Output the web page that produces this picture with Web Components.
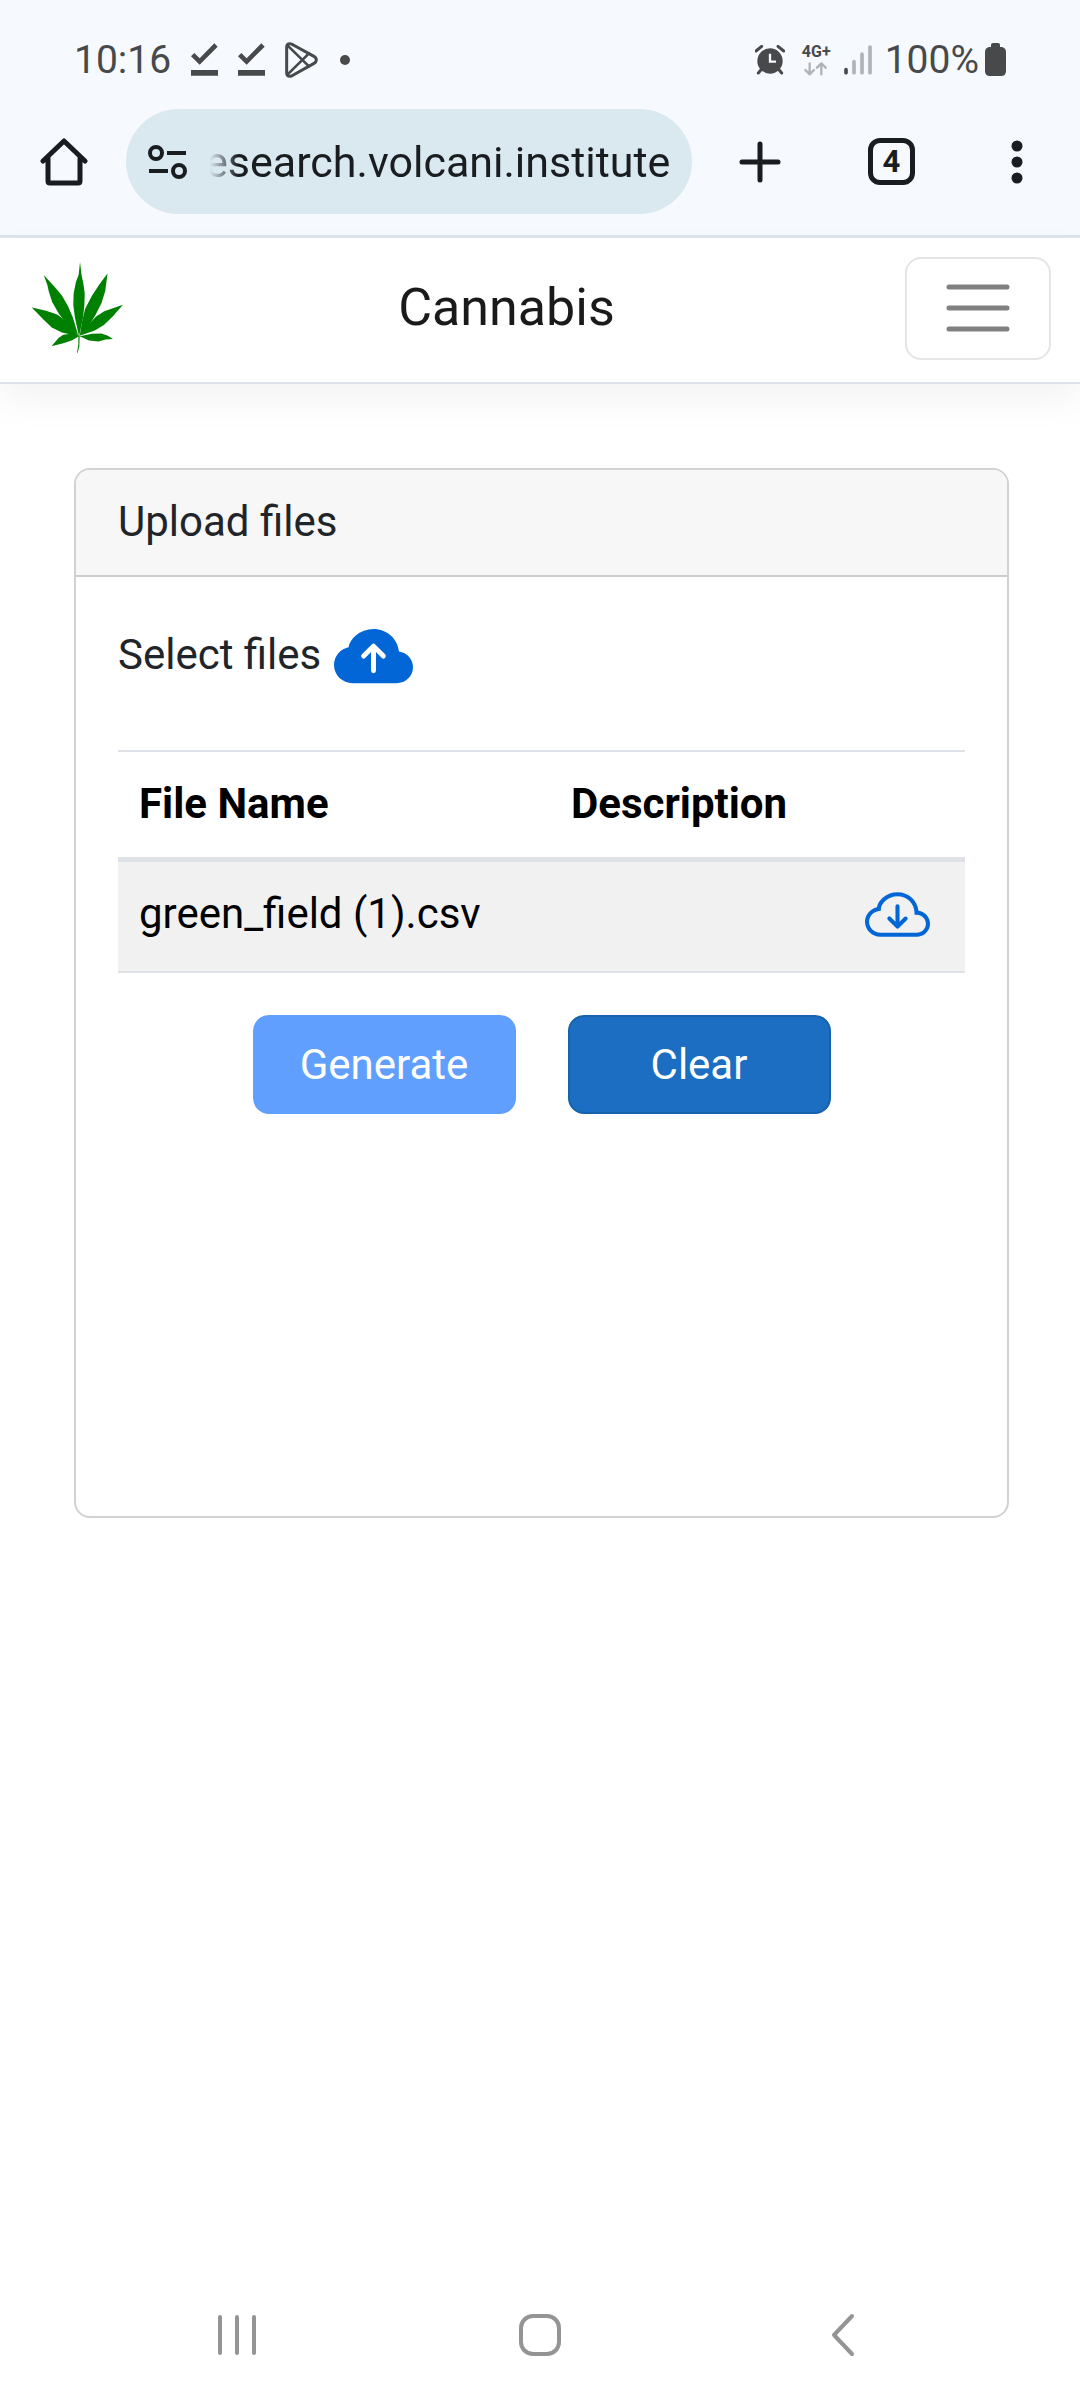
<!DOCTYPE html>
<html lang="en">
<head>
<meta charset="utf-8">
<meta name="viewport" content="width=device-width, initial-scale=1">
<title>Cannabis</title>
<style>
  body { margin: 0; background: #fff; font-family: Roboto, "Liberation Sans", sans-serif; font-size: 42px; line-height: 63px; color: #212529; }
</style>
</head>
<body>
<phone-screen>
  <status-bar slot="top" time="10:16" battery="100%"></status-bar>
  <browser-bar slot="top" url="esearch.volcani.institute" tabs="4"></browser-bar>
  <site-nav>Cannabis</site-nav>
  <upload-card>
    <span slot="header">Upload files</span>
    <file-picker>Select files</file-picker>
    <file-table file="green_field (1).csv"></file-table>
    <action-button slot="actions" kind="muted">Generate</action-button>
    <action-button slot="actions">Clear</action-button>
  </upload-card>
  <system-nav slot="bottom"></system-nav>
</phone-screen>

<script>
const define = (name, render, after) => customElements.define(name, class extends HTMLElement {
  connectedCallback() {
    if (this.shadowRoot) return;
    const root = this.attachShadow({ mode: 'open' });
    root.innerHTML = `<style>
      *, :host { box-sizing: border-box; }
      svg { display: block; flex: none; }
      button { font: inherit; color: inherit; background: none; border: 0; padding: 0; margin: 0; }
    </style>` + render(this);
    if (after) after(root);
  }
});

define('phone-screen', () => `
  <style>
    :host { display: flex; flex-direction: column; min-height: 100vh; }
    .chrome { background: #f6f9fe; border-bottom: 3px solid #dee4ea; }
    main { flex: 1; }
  </style>
  <div class="chrome"><slot name="top"></slot></div>
  <main><slot></slot></main>
  <slot name="bottom"></slot>`);

define('status-bar', el => `
  <style>
    :host { display: flex; justify-content: space-between; align-items: center; height: 109px; padding: 10px 74px 0 74px;
            font-size: 39px; line-height: 48px; color: #48494b; }
    div { display: flex; align-items: center; }
    .left { gap: 20px; }
    .right { gap: 13px; }
    .net { display: flex; flex-direction: column; align-items: center; gap: 2px; padding: 0 0 0 4px; font-size: 16px; line-height: 16px; font-weight: 700; }
    .charge { gap: 6px; }
  </style>
  <div class="left">
    <span>${el.getAttribute('time')}</span>
    ${`<svg width="27" height="33" viewBox="448 72 81 99" fill="#48494b"><path d="M448 112l10-10 16 16 44-45 10 10-54 54zM448 153h81v17h-81z"/></svg>`.repeat(2)}
    <svg width="33" height="36" viewBox="728 67 99 108" fill="none" stroke="#48494b" stroke-width="9" stroke-linejoin="round" stroke-linecap="round">
      <path d="M733 82Q733 72 743 72Q748 72 753 76L815 110Q822 114 822 121Q822 127 815 131L753 166Q747 170 743 170Q733 170 733 160Z"/>
      <path d="M736 78L800 140M736 164L800 101" stroke-width="8"/>
    </svg>
    <svg width="18" height="12" viewBox="0 0 18 12" fill="#48494b"><circle cx="7" cy="6" r="5"/></svg>
  </div>
  <div class="right">
    <svg width="30" height="30" viewBox="98 74 90 90">
      <path d="M101 92l17-14M184 92l-17-14M108 158l12-14M178 158l-12-14" stroke="#48494b" stroke-width="9" stroke-linecap="round"/>
      <circle cx="143" cy="122" r="38" fill="#48494b"/>
      <path d="M143 100v24h18" fill="none" stroke="#f6f9fe" stroke-width="7"/>
    </svg>
    <div class="net"><span>4G+</span>
      <svg width="24" height="14" viewBox="247 126 72 42" fill="none" stroke="#b1b3b7" stroke-width="7" stroke-linecap="round" stroke-linejoin="round"><path d="M264 130v33M251 150l13 13 13-13M299 163v-33M286 143l13-13 13 13"/></svg>
    </div>
    <svg width="28" height="30" viewBox="366 74 84 90" stroke-width="11" stroke-linecap="round" stroke="#b1b3b7">
      <path d="M372 148v9" stroke="#48494b"/><path d="M396 124v33M420 101v56M444 80v77"/></svg>
    <div class="charge"><span>${el.getAttribute('battery')}</span>
      <svg width="21" height="33" viewBox="0 0 21 33" fill="#48494b"><path d="M6 4V2Q6 0 8 0h5q2 0 2 2v2h2q4 1 4 5v19q0 5-5 5H5q-5 0-5-5V9Q0 5 4 4z"/></svg>
    </div>
  </div>`);

define('browser-bar', el => `
  <style>
    :host { display: flex; align-items: center; padding: 0 57px 21px 40px; color: #191d20; }
    .pill { flex: 1; min-width: 0; display: flex; align-items: center; gap: 22px; height: 105px; margin: 0 47px 0 38px; padding: 0 22px; border-radius: 53px; background: #dae8f0; }
    input { flex: 1; min-width: 0; border: 0; padding: 0; background: none; outline: 0; color: inherit; font: 43px/60px Roboto, sans-serif; text-align: right;
            -webkit-mask-image: linear-gradient(90deg, transparent, #000 28px); mask-image: linear-gradient(90deg, transparent, #000 28px); }
    .tools { display: flex; align-items: center; }
    .tabs { display: grid; place-items: center; width: 47px; height: 47px; margin: 0 96px 0 87px; border: 5px solid; border-radius: 12px; font-size: 31px; line-height: 36px; font-weight: 700; }
  </style>
  <button aria-label="Home"><svg width="48" height="48" viewBox="0 0 48 48" fill="none" stroke="currentColor" stroke-width="5" stroke-linejoin="round" stroke-linecap="round"><path d="M3 23L24 3l21 20M8 19v24q0 2 2 2h28q2 0 2-2V19"/></svg></button>
  <div class="pill">
    <svg width="40" height="34" viewBox="0 0 40 34" fill="none" stroke="currentColor" stroke-width="4"><circle cx="8" cy="8" r="6"/><circle cx="31" cy="26" r="6"/><path d="M19 8h19M1 26h19"/></svg>
    <input type="text" aria-label="Address" value="${el.getAttribute('url')}">
  </div>
  <div class="tools">
    <button aria-label="New tab"><svg width="42" height="42" viewBox="0 0 42 42" stroke="currentColor" stroke-width="5" stroke-linecap="round"><path d="M21 3v36M3 21h36"/></svg></button>
    <button class="tabs" aria-label="Tabs">${el.getAttribute('tabs')}</button>
    <button aria-label="Menu"><svg width="12" height="44" viewBox="0 0 12 44" fill="currentColor"><circle cx="6" cy="6" r="5.5"/><circle cx="6" cy="22" r="5.5"/><circle cx="6" cy="38" r="5.5"/></svg></button>
  </div>`, root => { const i = root.querySelector('input'); i.scrollLeft = i.scrollWidth; });

define('site-nav', () => `
  <style>
    :host { display: flex; align-items: center; height: 146px; padding: 0 29px 4px 32px; background: #fff; border-bottom: 2px solid #dee2e6; box-shadow: 0 16px 36px rgba(0,0,0,.05); }
    h1 { flex: 1; margin: 0 16px 0 0; text-align: center; font-size: 52px; line-height: 80px; font-weight: 400; color: #1a1a1a; }
    .menu { display: grid; place-items: center; width: 146px; height: 103px; border: 2px solid #e5e5e5; border-radius: 16px; }
  </style>
  <svg width="92" height="92" viewBox="98 96 274 274" fill="#008000" role="img" aria-label="Leaf">
    <path d="M241 96L246 138L251 160L255 190L254 225L250 262L238 318L226 262L221 225L222 190L229 155L237 134Z"/>
    <path d="M133 135L165 170L187 196L205 227L220 262L236 316L203 282L178 250L158 215L148 184L144 165Z"/>
    <path d="M323 130L316 183L305 218L286 256L264 291L240 316L247 275L256 236L276 197L300 161Z"/>
    <path d="M97 231L140 241L173 252L198 271L215 290L236 317L187 306L157 291L132 267Z"/>
    <path d="M369 223L337 260L312 284L285 300L240 316L266 284L288 259L313 243Z"/>
    <path d="M156 347L177 322L191 313L214 310L240 316L218 329L194 337Z"/>
    <path d="M339 325L317 327L296 333L268 330L240 317L277 310L305 309L324 316Z"/>
    <path d="M236 316h4l-1 30-5 20h-2l4-25z"/>
  </svg>
  <h1><slot></slot></h1>
  <button class="menu" aria-label="Toggle navigation"><svg width="64" height="48" viewBox="0 0 64 48" stroke="#808080" stroke-width="5" stroke-linecap="round"><path d="M3 3h58M3 24h58M3 45h58"/></svg></button>`);

define('upload-card', () => `
  <style>
    :host { display: flex; flex-direction: column; min-height: 1050px; margin: 84px 71px 84px 74px; border: 2px solid #d2d2d2; border-radius: 16px; overflow: hidden; }
    header { padding: 20px 42px 22px; background: #f7f7f7; border-bottom: 2px solid #cdcdcd; }
    section { padding: 42px; }
    .actions { display: flex; justify-content: center; gap: 52px; margin-top: 42px; }
  </style>
  <header><slot name="header"></slot></header>
  <section><slot></slot><div class="actions"><slot name="actions"></slot></div></section>`);

define('file-picker', () => `
  <style>
    :host { display: block; }
    label { display: flex; align-items: flex-start; gap: 13px; }
    span { padding-top: 4px; }
    input { position: absolute; width: 1px; height: 1px; opacity: 0; }
  </style>
  <label for="files"><span><slot></slot></span>
    <svg width="79" height="79" viewBox="0 0 16 16" fill="#0366d6"><path d="M8 2a5.53 5.53 0 0 0-3.594 1.342c-.766.66-1.321 1.52-1.464 2.383C1.266 6.095 0 7.555 0 9.318 0 11.366 1.708 13 3.781 13h8.906C14.502 13 16 11.57 16 9.773c0-1.636-1.242-2.969-2.834-3.194C12.923 3.999 10.69 2 8 2zm2.354 5.146a.5.5 0 0 1-.708.708L8.500 6.707V10.500a.5.5 0 0 1-1 0V6.707L6.354 7.854a.5.5 0 1 1-.708-.708l2-2a.5.5 0 0 1 .708 0l2 2z"/></svg>
  </label><input id="files" type="file" multiple>`);

define('file-table', el => `
  <style>
    :host { display: block; margin-top: 52px; }
    table { width: 100%; border-collapse: separate; border-spacing: 0; table-layout: fixed; color: #000; }
    th, td { padding: 20px 21px 22px; text-align: left; vertical-align: top; border-bottom: 2px solid #dee2e6; }
    th { border-top: 2px solid #dee2e6; border-bottom: 5px solid #dee2e6; font-weight: 700; }
    td { background: #f1f1f1; }
    .name { width: 51%; } .get { width: 16%; }
    td:last-child { vertical-align: middle; padding: 22px 0; }
    button { display: block; margin: 0 auto; }
  </style>
  <table>
    <thead><tr><th class="name">File Name</th><th>Description</th><th class="get"></th></tr></thead>
    <tbody><tr><td>${el.getAttribute('file')}</td><td></td><td><button aria-label="Download">
      <svg width="65" height="65" viewBox="0 0 16 16" fill="#0366d6"><path d="M7.646 10.854a.5.5 0 0 0 .708 0l2-2a.5.5 0 0 0-.708-.708L8.500 9.293V5.500a.5.5 0 0 0-1 0v3.793L6.354 8.146a.5.5 0 1 0-.708.708l2 2z"/><path d="M4.406 3.342A5.530 5.530 0 0 1 8 2c2.690 0 4.923 2 5.166 4.579C14.758 6.804 16 8.137 16 9.773 16 11.569 14.502 13 12.687 13H3.781C1.708 13 0 11.366 0 9.318c0-1.763 1.266-3.223 2.942-3.593.143-.863.698-1.723 1.464-2.383zm.653.757c-.757.653-1.153 1.440-1.153 2.056v.448l-.445.049C2.064 6.805 1 7.952 1 9.318 1 10.785 2.230 12 3.781 12h8.906C13.980 12 15 10.988 15 9.773c0-1.216-1.020-2.228-2.313-2.228h-.5v-.5C12.188 4.825 10.328 3 8 3a4.530 4.530 0 0 0-2.941 1.100z"/></svg>
    </button></td></tr></tbody>
  </table>`);

define('action-button', () => `
  <style>
    :host { display: block; }
    button { width: 263px; height: 99px; border: 2px solid #1861ac; border-radius: 16px; background: #1b6ec2; color: #fff; }
    :host([kind=muted]) button { background: #609ffd; border-color: #609ffd; }
  </style>
  <button><slot></slot></button>`);

define('system-nav', () => `
  <style>
    :host { display: flex; justify-content: space-between; align-items: center; height: 130px; padding: 0 216px; }
    button { display: grid; place-items: center; width: 42px; }
  </style>
  <button aria-label="Recents"><svg width="40" height="42" viewBox="0 0 40 42" stroke="#949494" stroke-width="4" stroke-linecap="round"><path d="M3 3v36M20 3v36M37 3v36"/></svg></button>
  <button aria-label="Home screen"><svg width="42" height="42" viewBox="0 0 42 42" fill="none" stroke="#949494" stroke-width="4"><rect x="2" y="2" width="38" height="38" rx="12"/></svg></button>
  <button aria-label="Back"><svg width="24" height="44" viewBox="0 0 24 44" fill="none" stroke="#949494" stroke-width="4" stroke-linecap="round" stroke-linejoin="round"><path d="M21 3L3 22l18 19"/></svg></button>`);
</script>
</body>
</html>
